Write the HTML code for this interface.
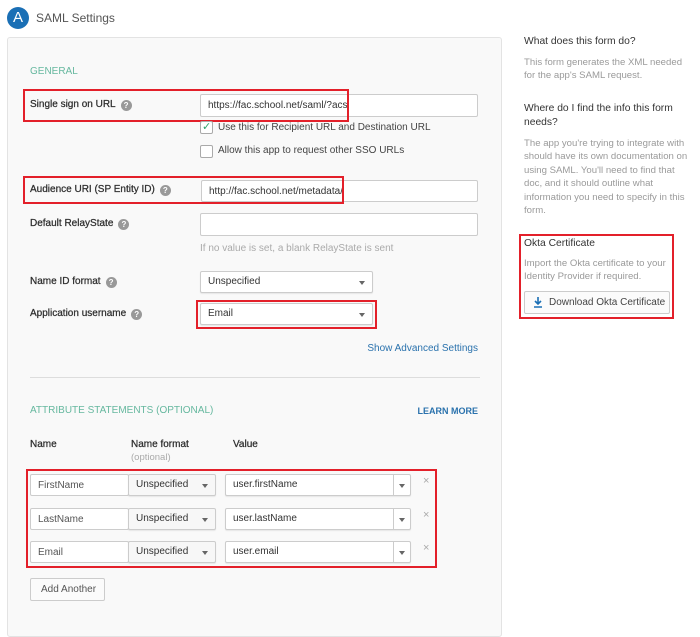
<!DOCTYPE html>
<html><head><meta charset="utf-8"><style>
*{box-sizing:border-box;margin:0;padding:0}
body{width:700px;height:611px;overflow:hidden;background:#fff;font-family:"Liberation Sans",sans-serif;font-size:11px;color:#333;position:relative}
.a{position:absolute;white-space:nowrap}
.panel{position:absolute;left:7px;top:37px;width:495px;height:600px;background:#f9f9f9;border:1px solid #e3e3e3;border-radius:3px}
.lbl{position:absolute;left:30px;color:#2e2e2e;font-size:10px;line-height:14px;-webkit-text-stroke:0.25px #2e2e2e}
.q{display:inline-block;width:11px;height:11px;border-radius:50%;background:#999;color:#fff;font-size:8px;text-align:center;line-height:11px;margin-left:5px;vertical-align:-1px;font-weight:bold;-webkit-text-stroke:0}
.in{position:absolute;background:#fff;border:1px solid #ccc;border-radius:2px;font-size:10px;color:#333;padding-left:7px;line-height:21px}
.sel{position:absolute;background:#fff;border:1px solid #ccc;border-radius:2px;font-size:10px;color:#333;padding-left:7px;line-height:20px;box-shadow:0 1px 1px rgba(0,0,0,.08)}
.arr{position:absolute;right:7px;top:9px;width:0;height:0;border-left:3px solid transparent;border-right:3px solid transparent;border-top:4px solid #666}
.red{position:absolute;border:2px solid #e3202a}
.cb{position:absolute;width:13px;height:13px;border:1px solid #aaa;background:#fff;border-radius:2px}
.sub{color:#9a9a9a;font-size:9.6px;line-height:13.4px}
.hd{color:#333;font-size:10.3px;line-height:13.5px}
</style></head><body>
<div class="a" style="left:7px;top:7px;width:22px;height:22px;border-radius:50%;background:#1a6fb5;color:#fff;font-size:15px;text-align:center;line-height:22px">A</div>
<div class="a" style="left:36px;top:11px;font-size:12px;color:#555">SAML Settings</div>
<div class="panel"></div>
<div class="a" style="left:30px;top:66px;color:#66b89f;font-size:10px">GENERAL</div>

<div class="lbl" style="top:98px">Single sign on URL<span class="q">?</span></div>
<div class="in" style="left:200px;top:94px;width:278px;height:23px">https://fac.school.net/saml/?acs</div>
<div class="red" style="left:23px;top:89px;width:326px;height:33px"></div>
<div class="cb" style="left:200px;top:121px"></div>
<div class="a" style="left:202px;top:120px;color:#2fa36b;font-size:11px">✓</div>
<div class="a" style="left:218px;top:122px;font-size:10px;color:#444">Use this for Recipient URL and Destination URL</div>
<div class="cb" style="left:200px;top:145px"></div>
<div class="a" style="left:218px;top:145px;font-size:10px;color:#444">Allow this app to request other SSO URLs</div>

<div class="lbl" style="top:183px">Audience URI (SP Entity ID)<span class="q">?</span></div>
<div class="in" style="left:201px;top:180px;width:277px;height:22px">http://fac.school.net/metadata/</div>
<div class="red" style="left:23px;top:176px;width:321px;height:28px"></div>

<div class="lbl" style="top:217px">Default RelayState<span class="q">?</span></div>
<div class="in" style="left:200px;top:213px;width:278px;height:23px"></div>
<div class="a sub" style="left:200px;top:242px;color:#aaa;font-size:10px">If no value is set, a blank RelayState is sent</div>

<div class="lbl" style="top:275px">Name ID format<span class="q">?</span></div>
<div class="sel" style="left:200px;top:271px;width:173px;height:22px">Unspecified<div class="arr"></div></div>
<div class="lbl" style="top:307px">Application username<span class="q">?</span></div>
<div class="sel" style="left:200px;top:303px;width:173px;height:22px">Email<div class="arr"></div></div>
<div class="red" style="left:196px;top:300px;width:181px;height:29px"></div>
<div class="a" style="right:222px;top:343px;color:#2a72ad;font-size:10px">Show Advanced Settings</div>
<div class="a" style="left:30px;top:377px;width:450px;height:1px;background:#ddd"></div>

<div class="a" style="left:30px;top:405px;color:#66b89f;font-size:10px">ATTRIBUTE STATEMENTS (OPTIONAL)</div>
<div class="a" style="right:222px;top:406px;color:#2a72ad;font-size:9px;font-weight:bold">LEARN MORE</div>
<div class="lbl" style="top:438px">Name</div>
<div class="lbl" style="left:131px;top:438px">Name format</div>
<div class="a" style="left:131px;top:452px;color:#aaa;font-size:9.5px">(optional)</div>
<div class="lbl" style="left:233px;top:438px">Value</div>

<div class="in" style="left:30px;top:474px;width:99px;height:22px;color:#555">FirstName</div>
<div class="sel" style="left:128px;top:474px;width:88px;height:22px;background:#f7f7f7">Unspecified<div class="arr"></div></div>
<div class="sel" style="left:225px;top:474px;width:186px;height:22px">user.firstName<div style="position:absolute;right:0;top:0;width:17px;height:20px;border-left:1px solid #ccc"><div class="arr" style="right:5px"></div></div></div>
<div class="a" style="left:423px;top:475px;color:#aaa;font-size:11px">×</div>

<div class="in" style="left:30px;top:508px;width:99px;height:22px;color:#555">LastName</div>
<div class="sel" style="left:128px;top:508px;width:88px;height:22px;background:#f7f7f7">Unspecified<div class="arr"></div></div>
<div class="sel" style="left:225px;top:508px;width:186px;height:22px">user.lastName<div style="position:absolute;right:0;top:0;width:17px;height:20px;border-left:1px solid #ccc"><div class="arr" style="right:5px"></div></div></div>
<div class="a" style="left:423px;top:509px;color:#aaa;font-size:11px">×</div>

<div class="in" style="left:30px;top:541px;width:99px;height:22px;color:#555">Email</div>
<div class="sel" style="left:128px;top:541px;width:88px;height:22px;background:#f7f7f7">Unspecified<div class="arr"></div></div>
<div class="sel" style="left:225px;top:541px;width:186px;height:22px">user.email<div style="position:absolute;right:0;top:0;width:17px;height:20px;border-left:1px solid #ccc"><div class="arr" style="right:5px"></div></div></div>
<div class="a" style="left:423px;top:542px;color:#aaa;font-size:11px">×</div>
<div class="red" style="left:26px;top:469px;width:411px;height:99px"></div>
<div class="in" style="left:30px;top:578px;width:75px;height:23px;background:#fbfbfb;padding-left:10px;color:#555">Add Another</div>

<div class="a hd" style="left:524px;top:35px">What does this form do?</div>
<div class="a sub" style="left:524px;top:56px">This form generates the XML needed<br>for the app's SAML request.</div>
<div class="a hd" style="left:524px;top:102px">Where do I find the info this form<br>needs?</div>
<div class="a sub" style="left:524px;top:137px">The app you're trying to integrate with<br>should have its own documentation on<br>using SAML. You'll need to find that<br>doc, and it should outline what<br>information you need to specify in this<br>form.</div>
<div class="a hd" style="left:524px;top:237px">Okta Certificate</div>
<div class="a sub" style="left:524px;top:257px">Import the Okta certificate to your<br>Identity Provider if required.</div>
<div class="a" style="left:524px;top:291px;width:146px;height:23px;border:1px solid #ccc;border-radius:2px;background:#fbfbfb;font-size:10px;line-height:21px;padding-left:24px;color:#444">Download Okta Certificate</div>
<svg class="a" style="left:533px;top:296px" width="10" height="12" viewBox="0 0 10 12"><path d="M5 1v7M2 5l3 3 3-3M1 11h8" stroke="#1a6fb5" stroke-width="1.6" fill="none"/></svg>
<div class="red" style="left:519px;top:234px;width:155px;height:85px"></div>
</body></html>
